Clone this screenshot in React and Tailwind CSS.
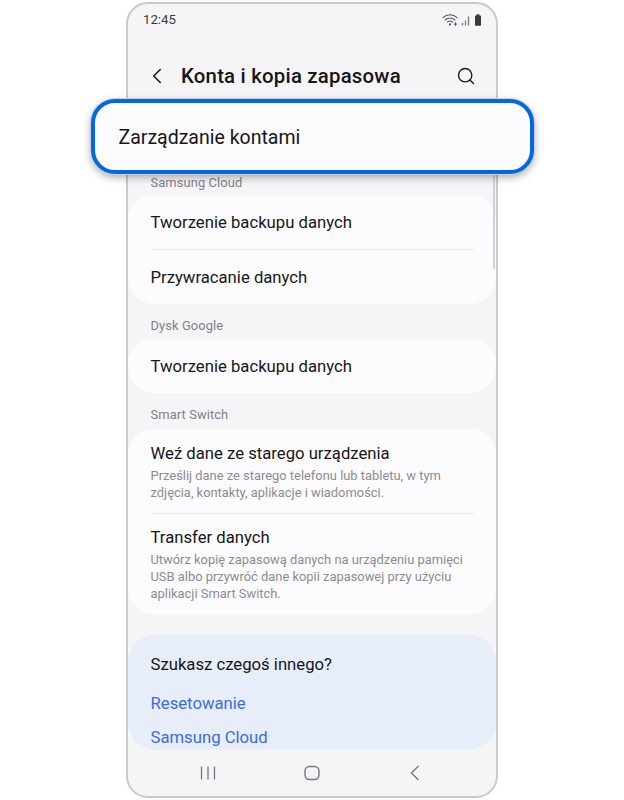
import { ChevronLeft, Search } from 'lucide-react'

const font = "font-['Roboto','Liberation_Sans',sans-serif]"

function SectionLabel({ children, className = '' }) {
  return <div className={`shrink-0 pl-[22.5px] text-[12.9px] leading-[16px] font-normal tracking-[0.1px] text-[#808186] ${className}`}>{children}</div>
}

function Row({ title, desc, className = '' }) {
  return (
    <div className={className}>
      <div className="text-[16.7px] leading-[22px] text-[#161618]">{title}</div>
      {desc && <div className="mt-[2px] text-[12.9px] leading-[17px] text-[#8b8c90]">{desc}</div>}
    </div>
  )
}

function StatusIcons() {
  return (
    <svg width="42" height="14" viewBox="0 0 42 14" fill="none">
      <g stroke="#55565a" strokeWidth="1.1" strokeLinecap="round">
        <path d="M1 4.6C4.8 0.8 11.2 0.8 15 4.6" />
        <path d="M3.2 7C5.8 4.4 10.2 4.4 12.8 7" />
        <path d="M5.4 9.2C6.9 7.8 9.1 7.8 10.6 9.2" />
      </g>
      <circle cx="8" cy="11.4" r="1.1" fill="#55565a" />
      <path d="M13.5 9.4V12.8M11.8 11.1H15.2" stroke="#55565a" strokeWidth="1" />
      <path d="M20.5 10V12.5M23.5 7.5V12.5M26.5 3.5V12.5" stroke="#77787c" strokeWidth="1.3" />
      <path d="M33 3.4C33 2.9 33.4 2.6 33.8 2.6H34.6V1.2H37.4V2.6H38.2C38.7 2.6 39 2.9 39 3.4V12C39 12.5 38.7 12.8 38.2 12.8H33.8C33.4 12.8 33 12.5 33 12Z" fill="#3a3a3c" />
    </svg>
  )
}

function App() {
  return (
    <div className={`h-[800px] w-[624px] overflow-hidden bg-white pt-[2px] pl-[126px] ${font}`}>
      <div className="relative flex h-[796px] w-[372px] flex-col overflow-hidden rounded-[22px] border-2 border-[#c9c9cb] bg-[#f5f5f8]">
        <div className="flex h-[32px] shrink-0 items-center justify-between pr-[12px] pl-[15px] text-[13.2px] text-[#3a3a3c]">
          <span>12:45</span>
          <StatusIcons />
        </div>

        <div className="flex h-[50px] shrink-0 items-center pt-[30px] pr-[20px] pl-[16px]">
          <ChevronLeft size={26} strokeWidth={1.5} className="text-[#1c1c1e]" />
          <h1 className="ml-[11px] flex-1 text-[20.4px] font-medium tracking-[0.2px] whitespace-nowrap text-[#161618]">Konta i kopia zapasowa</h1>
          <Search size={20} strokeWidth={1.7} className="text-[#1c1c1e]" />
        </div>

        <div className="flex flex-1 flex-col overflow-hidden pt-[89px]">
          <SectionLabel>Samsung Cloud</SectionLabel>
          <div className="mt-[4px] shrink-0 rounded-[26px] bg-[#fcfbfe] px-[22.5px]">
            <Row title="Tworzenie backupu danych" className="flex h-[55px] items-center border-b border-[#e9e9ec] pt-[2px]" />
            <Row title="Przywracanie danych" className="flex h-[54px] items-center pt-[1px]" />
          </div>
          <SectionLabel className="mt-[14px]">Dysk Google</SectionLabel>
          <div className="mt-[5px] flex h-[54px] shrink-0 items-center rounded-[26px] bg-[#fcfbfe] px-[22.5px] pt-[1px]">
            <Row title="Tworzenie backupu danych" />
          </div>
          <SectionLabel className="mt-[14px]">Smart Switch</SectionLabel>
          <div className="mt-[6px] shrink-0 rounded-[26px] bg-[#fcfbfe] px-[22.5px]">
            <Row
              title="Weź dane ze starego urządzenia"
              desc={<>Prześlij dane ze starego telefonu lub tabletu, w tym<br />zdjęcia, kontakty, aplikacje i wiadomości.</>}
              className="h-[85px] border-b border-[#e9e9ec] pt-[14px]"
            />
            <Row
              title="Transfer danych"
              desc={<>Utwórz kopię zapasową danych na urządzeniu pamięci<br />USB albo przywróć dane kopii zapasowej przy użyciu<br />aplikacji Smart Switch.</>}
              className="h-[100px] pt-[13px]"
            />
          </div>

          <div className="mt-[20px] h-[116px] shrink-0 rounded-[28px] bg-[#e7edf9] px-[22.5px] pt-[20px]">
            <div className="text-[16.7px] leading-[22px] text-[#161618]">Szukasz czegoś innego?</div>
            <div className="mt-[17px] text-[16.7px] leading-[22px] text-[#3a6ddb]">Resetowanie</div>
            <div className="mt-[12px] text-[16.7px] leading-[22px] text-[#3a6ddb]">Samsung Cloud</div>
          </div>

          <div className="flex h-[46px] shrink-0 items-center justify-center pr-[1px]">
            <div className="flex w-[103.5px] justify-center">
              <svg width="16" height="16" viewBox="0 0 16 16" fill="none" stroke="#77787c" strokeWidth="1.3">
                <path d="M1.5 1.5V14.5M8 1.5V14.5M14.5 1.5V14.5" />
              </svg>
            </div>
            <div className="flex w-[103.5px] justify-center">
              <svg width="16" height="16" viewBox="0 0 16 16" fill="none" stroke="#77787c" strokeWidth="1.4">
                <rect x="1" y="1.5" width="14" height="13" rx="4.5" />
              </svg>
            </div>
            <div className="flex w-[103.5px] justify-center">
              <svg width="10" height="16" viewBox="0 0 10 16" fill="none" stroke="#77787c" strokeWidth="1.4">
                <path d="M8.5 1L1.5 8L8.5 15" />
              </svg>
            </div>
          </div>
        </div>

        {/* scroll indicator */}
        <div className="absolute top-[160px] right-[1px] h-[105px] w-[2px] rounded-full bg-[#d2d2d6]" />
      </div>

      {/* callout over the phone */}
      <div className="absolute top-[99px] left-[91px] flex h-[75px] w-[443px] items-center rounded-[24px] border-[4px] border-[#0068e0] bg-[#fcfbfe] pt-[2px] pl-[23.5px] text-[19.5px] text-[#161618] shadow-[0_3px_8px_rgba(0,0,0,0.35)] ring-1 ring-[#d0d0d4]">
        Zarządzanie kontami
      </div>
    </div>
  )
}

export default App
